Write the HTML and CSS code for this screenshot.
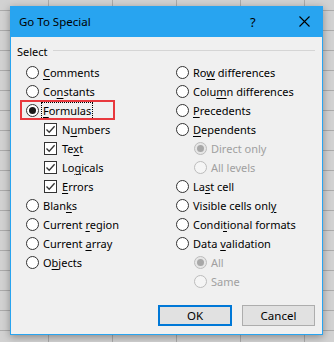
FILE: index.html
```html
<!DOCTYPE html>
<html>
<head>
<meta charset="utf-8">
<link rel="stylesheet" href="styles.css">
</head>
<body>
<div class="dialog">
  <div class="titlebar">
    <span class="title">Go To Special</span>
    <span class="help">?</span>
    <span class="close"><svg width="11" height="11" viewBox="0 0 11 11"><path d="M0.5 0.5L10.5 10.5M10.5 0.5L0.5 10.5" stroke="#000" stroke-width="1.1" fill="none"/></svg></span>
  </div>
  <div class="body">
    <div class="group-head"><span>Select</span><span class="rule"></span></div>
    <div class="cols">
      <div class="col">
        <div class="row"><span class="radio"></span><span class="lbl"><u>C</u>omments</span></div>
        <div class="row"><span class="radio"></span><span class="lbl">Co<u>n</u>stants</span></div>
        <div class="row highlight"><span class="radio on"></span><span class="lbl"><span class="focus"><u>F</u>ormulas</span></span><span class="redbox"></span></div>
        <div class="row sub"><span class="check"><svg width="11" height="11" viewBox="0 0 11 11"><path d="M1.5 5.5L4.2 8.3L9.6 2.2" stroke="#333" stroke-width="1.3" fill="none"/></svg></span><span class="lbl">N<u>u</u>mbers</span></div>
        <div class="row sub"><span class="check"><svg width="11" height="11" viewBox="0 0 11 11"><path d="M1.5 5.5L4.2 8.3L9.6 2.2" stroke="#333" stroke-width="1.3" fill="none"/></svg></span><span class="lbl">Te<u>x</u>t</span></div>
        <div class="row sub"><span class="check"><svg width="11" height="11" viewBox="0 0 11 11"><path d="M1.5 5.5L4.2 8.3L9.6 2.2" stroke="#333" stroke-width="1.3" fill="none"/></svg></span><span class="lbl">Lo<u>g</u>icals</span></div>
        <div class="row sub"><span class="check"><svg width="11" height="11" viewBox="0 0 11 11"><path d="M1.5 5.5L4.2 8.3L9.6 2.2" stroke="#333" stroke-width="1.3" fill="none"/></svg></span><span class="lbl"><u>E</u>rrors</span></div>
        <div class="row"><span class="radio"></span><span class="lbl">Blan<u>k</u>s</span></div>
        <div class="row"><span class="radio"></span><span class="lbl">Current <u>r</u>egion</span></div>
        <div class="row"><span class="radio"></span><span class="lbl">Current <u>a</u>rray</span></div>
        <div class="row"><span class="radio"></span><span class="lbl">O<u>b</u>jects</span></div>
      </div>
      <div class="col">
        <div class="row"><span class="radio"></span><span class="lbl">Ro<u>w</u> differences</span></div>
        <div class="row"><span class="radio"></span><span class="lbl">Colu<u>m</u>n differences</span></div>
        <div class="row"><span class="radio"></span><span class="lbl"><u>P</u>recedents</span></div>
        <div class="row"><span class="radio"></span><span class="lbl"><u>D</u>ependents</span></div>
        <div class="row sub2 disabled"><span class="radio on"></span><span class="lbl">Direct only</span></div>
        <div class="row sub2 disabled"><span class="radio"></span><span class="lbl">All levels</span></div>
        <div class="row"><span class="radio"></span><span class="lbl">La<u>s</u>t cell</span></div>
        <div class="row"><span class="radio"></span><span class="lbl">Visible cells onl<u>y</u></span></div>
        <div class="row"><span class="radio"></span><span class="lbl">Condi<u>t</u>ional formats</span></div>
        <div class="row"><span class="radio"></span><span class="lbl">Data <u>v</u>alidation</span></div>
        <div class="row sub2 disabled"><span class="radio on"></span><span class="lbl">All</span></div>
        <div class="row sub2 disabled"><span class="radio"></span><span class="lbl">Same</span></div>
      </div>
    </div>
    <div class="buttons">
      <button class="btn default">OK</button>
      <button class="btn cancel">Cancel</button>
    </div>
  </div>
</div>
</body>
</html>
```
FILE: styles.css
```css
html, body {
  margin: 0;
  padding: 0;
}
body {
  width: 334px;
  height: 342px;
  overflow: hidden;
  font-family: "Noto Sans", "Open Sans", sans-serif;
  font-size: 11px;
  color: #000;
  background-color: #d2d2d2;
  background-image:
    linear-gradient(to right, #ababab 1px, transparent 1px),
    linear-gradient(to bottom, #ababab 1px, transparent 1px);
  background-size: 64px 20px, 64px 20px;
  background-position: 48px 0, 0 10px;
}
.dialog {
  margin: 6px 0 0 10px;
  width: 313px;
  box-shadow: 0 2px 8px rgba(0, 0, 0, 0.35);
}
.titlebar {
  height: 31px;
  background: #28a4f0;
  display: flex;
  align-items: center;
  padding-left: 9px;
  box-sizing: border-box;
}
.title {
  flex: 1;
  font-size: 11.5px;
}
.help {
  font-size: 13px;
  width: 14px;
  margin-right: 35px;
}
.close {
  display: flex;
  width: 11px;
  margin-right: 13px;
}
.body {
  background: #f0f0f0;
  border: 1px solid #28a4f0;
  border-top: none;
  padding: 7px 7px 8px 6px;
}
.group-head {
  display: flex;
  align-items: center;
  height: 16px;
  line-height: 16px;
}
.rule {
  flex: 1;
  height: 1px;
  background: #d5d5d5;
  margin-left: 5px;
  margin-top: -3px;
}
.cols {
  display: flex;
  margin-top: 3px;
  padding-left: 9px;
}
.col:first-child {
  width: 150px;
}
.row {
  position: relative;
  height: 19px;
  display: flex;
  align-items: center;
  white-space: nowrap;
}
.row.sub,
.row.sub2 {
  padding-left: 18px;
}
.radio {
  width: 13px;
  height: 13px;
  box-sizing: border-box;
  border: 1px solid #333;
  border-radius: 50%;
  background: #fff;
  margin-right: 4px;
  flex: none;
  display: flex;
  align-items: center;
  justify-content: center;
}
.radio.on::after {
  content: "";
  width: 7px;
  height: 7px;
  border-radius: 50%;
  background: #1a1a1a;
}
.disabled .radio {
  border-color: #bcbcbc;
  background: #f5f5f5;
}
.disabled .radio.on {
  background: #e6e6e6;
}
.disabled .radio.on::after {
  background: #a8a8a8;
}
.disabled .lbl {
  color: #a0a0a0;
}
.check {
  width: 13px;
  height: 13px;
  box-sizing: border-box;
  border: 1px solid #333;
  background: #fff;
  margin-right: 5px;
  flex: none;
  display: flex;
}
.check svg {
  display: block;
}
.lbl u {
  text-decoration-thickness: 1px;
  text-underline-offset: 2px;
}
.focus {
  display: inline-block;
  line-height: 14px;
  outline: 1px dotted #000;
  outline-offset: 1px;
}
.redbox {
  position: absolute;
  left: -6px;
  top: -1px;
  width: 95px;
  height: 20px;
  box-sizing: border-box;
  border: 2px solid #e8383d;
}
.buttons {
  display: flex;
  justify-content: flex-end;
  gap: 10px;
  margin-top: 14px;
}
.btn {
  font-family: "Noto Sans", "Open Sans", sans-serif;
  font-size: 11.5px;
  color: #000;
  height: 21px;
  padding: 0;
  background: #e1e1e1;
  border: 1px solid #adadad;
  box-sizing: border-box;
  line-height: 17px;
}
.btn.default {
  width: 74px;
  border: 2px solid #0078d7;
}
.btn.cancel {
  width: 73px;
}
```
